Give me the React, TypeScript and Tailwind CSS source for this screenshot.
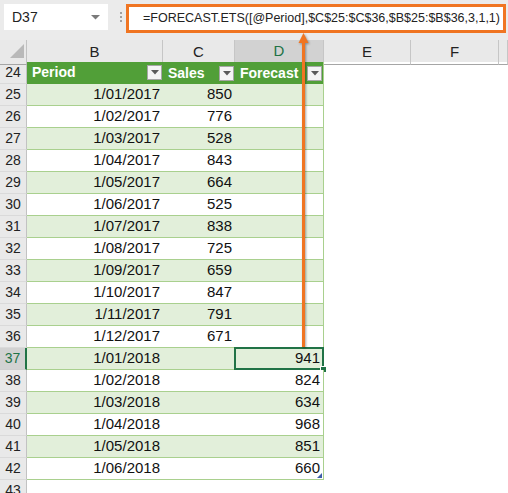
import React from "react";

const data: { n: number; b: string; c: string; d: string }[] = [
  { n: 25, b: "1/01/2017", c: "850", d: "" },
  { n: 26, b: "1/02/2017", c: "776", d: "" },
  { n: 27, b: "1/03/2017", c: "528", d: "" },
  { n: 28, b: "1/04/2017", c: "843", d: "" },
  { n: 29, b: "1/05/2017", c: "664", d: "" },
  { n: 30, b: "1/06/2017", c: "525", d: "" },
  { n: 31, b: "1/07/2017", c: "838", d: "" },
  { n: 32, b: "1/08/2017", c: "725", d: "" },
  { n: 33, b: "1/09/2017", c: "659", d: "" },
  { n: 34, b: "1/10/2017", c: "847", d: "" },
  { n: 35, b: "1/11/2017", c: "791", d: "" },
  { n: 36, b: "1/12/2017", c: "671", d: "" },
  { n: 37, b: "1/01/2018", c: "", d: "941" },
  { n: 38, b: "1/02/2018", c: "", d: "824" },
  { n: 39, b: "1/03/2018", c: "", d: "634" },
  { n: 40, b: "1/04/2018", c: "", d: "968" },
  { n: 41, b: "1/05/2018", c: "", d: "851" },
  { n: 42, b: "1/06/2018", c: "", d: "660" },
];

const grid = "grid grid-cols-[27px_136px_72px_89px_87px_88px_9px]";

function FilterButton() {
  return (
    <div className="w-[15px] h-[15px] mr-[1px] bg-[#f4f4f4] border border-[#a6a6a6] flex items-center justify-center shrink-0">
      <svg width="8" height="5" viewBox="0 0 8 5">
        <polygon points="0,0 8,0 4,4.5" fill="#5a5a5a" />
      </svg>
    </div>
  );
}

function RowHeader({ n, selected }: { n: number; selected?: boolean }) {
  return (
    <div
      className={
        selected
          ? "h-[22px] box-border bg-[#d2d2d2] border-r-2 border-r-[#217346] border-b border-b-[#cfcfcf] flex items-center justify-center text-[14px] text-[#217346]"
          : "h-[22px] box-border bg-[#e9e9e9] border-r border-r-[#c2c2c2] border-b border-b-[#dadada] flex items-center justify-center text-[14px] text-[#222]"
      }
    >
      {n}
    </div>
  );
}

export default function App() {
  return (
    <div className="relative w-[508px] h-[493px] overflow-hidden bg-white font-['Liberation_Sans',Arial,sans-serif]">
      {/* Formula bar */}
      <div className="h-[40px] bg-[#ebebeb] flex items-start pt-[4px] pl-[4px]">
        <div className="w-[104px] h-[26px] bg-white flex items-center justify-between pl-[8px] pr-[8px]">
          <span className="text-[14px] text-[#222]">D37</span>
          <svg width="9" height="5" viewBox="0 0 9 5">
            <polygon points="0,0 9,0 4.5,4.5" fill="#7a7a7a" />
          </svg>
        </div>
        <div className="w-[18px] h-[26px] flex flex-col items-center justify-center gap-[2px] pl-[8px]">
          <div className="w-[2px] h-[2px] bg-[#a0a0a0]" />
          <div className="w-[2px] h-[2px] bg-[#a0a0a0]" />
          <div className="w-[2px] h-[2px] bg-[#a0a0a0]" />
        </div>
        <div className="w-[380px] h-[29px] box-border border-[3px] border-[#f07522] bg-white flex items-center pl-[14px] whitespace-nowrap overflow-hidden">
          <span className="text-[12.5px] text-[#222]">
            =FORECAST.ETS([@Period],$C$25:$C$36,$B$25:$B$36,3,1,1)
          </span>
        </div>
      </div>

      {/* Column headers */}
      <div className={grid + " h-[22px] bg-[#e9e9e9]"}>
        <div className="relative box-border border-r border-r-[#c2c2c2] border-b border-b-[#a5a5a5]">
          <svg className="absolute left-[10px] top-[4px]" width="14" height="14" viewBox="0 0 14 14">
            <polygon points="14,0 14,14 0,14" fill="#b9b9b9" />
          </svg>
        </div>
        {["B", "C"].map((l) => (
          <div
            key={l}
            className="box-border border-r border-r-[#c6c6c6] border-b border-b-[#a5a5a5] flex items-center justify-center text-[15px] text-[#222]"
          >
            {l}
          </div>
        ))}
        <div className="box-border bg-[#d2d2d2] border-r border-r-[#c6c6c6] border-b-2 border-b-[#217346] flex items-center justify-center text-[15px] text-[#217346]">
          D
        </div>
        {["E", "F", ""].map((l, i) => (
          <div
            key={i}
            className="box-border border-r border-r-[#c6c6c6] border-b border-b-[#a5a5a5] flex items-center justify-center text-[15px] text-[#222]"
          >
            {l}
          </div>
        ))}
      </div>

      {/* Table header row 24 */}
      <div className={grid}>
        <RowHeader n={24} />
        <div className="h-[22px] bg-[#519f38] border-b border-b-[#519f38] flex items-center justify-between pl-[5px] box-border">
          <span className="text-[14px] font-bold text-white">Period</span>
          <FilterButton />
        </div>
        <div className="h-[22px] bg-[#519f38] flex items-center justify-between pl-[5px] box-border">
          <span className="text-[14px] font-bold text-white">Sales</span>
          <FilterButton />
        </div>
        <div className="h-[22px] bg-[#519f38] flex items-center justify-between pl-[5px] box-border border-r border-r-[#a9d08e]">
          <span className="text-[14px] font-bold text-white">Forecast</span>
          <FilterButton />
        </div>
        <div />
        <div />
        <div />
      </div>

      {/* Data rows */}
      {data.map((r, idx) => {
        const band = idx % 2 === 0 ? "bg-[#e2efda]" : "bg-white";
        const sel = r.n === 37;
        const cell =
          "h-[22px] box-border border-b border-b-[#a9d08e] flex items-start justify-end pr-[3px] text-[15px] leading-[20px] text-[#111] " +
          band;
        return (
          <div key={r.n} className={grid}>
            <RowHeader n={r.n} selected={sel} />
            <div className={cell}>{r.b}</div>
            <div className={cell}>{r.c}</div>
            <div className={cell + " relative border-r border-r-[#a9d08e]"}>
              {r.d}
              {sel && (
                <>
                  <div className="absolute -top-[1px] -left-[1px] -right-[1px] -bottom-[1px] border-2 border-[#217346]" />
                  <div className="absolute -right-[4px] -bottom-[4px] w-[7px] h-[7px] bg-[#217346] border border-white" />
                </>
              )}
              {r.n === 42 && (
                <svg className="absolute right-[1px] bottom-[1px]" width="5" height="5" viewBox="0 0 5 5">
                  <polygon points="5,0 5,5 0,5" fill="#3d5ea8" />
                </svg>
              )}
            </div>
            <div />
            <div />
            <div />
          </div>
        );
      })}

      {/* Row 43 */}
      <div className={grid}>
        <RowHeader n={43} />
      </div>

      {/* Orange arrow overlay */}
      <svg
        className="absolute left-[296px] top-[32px] drop-shadow-[1px_1px_1px_rgba(0,0,0,0.35)]"
        width="15"
        height="318"
        viewBox="0 0 15 318"
      >
        <line x1="7.5" y1="8" x2="7.5" y2="315" stroke="#f07522" strokeWidth="3" />
        <polygon points="7.5,1 2.5,11 12.5,11" fill="#f07522" />
      </svg>
    </div>
  );
}
